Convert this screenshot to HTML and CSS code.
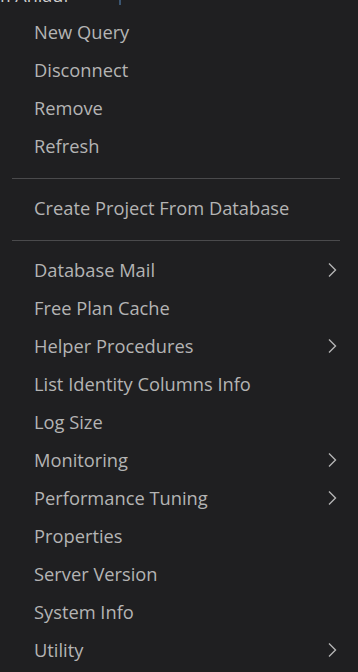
FILE: index.html
```html
<!DOCTYPE html>
<html>
<head>
<meta charset="utf-8">
<link rel="stylesheet" href="styles.css">
</head>
<body>
<div class="menu">
  <div class="peek"><span class="peek-text">m Anlauf</span><span class="peek-dot"></span></div>
  <div class="item">New Query</div>
  <div class="item">Disconnect</div>
  <div class="item">Remove</div>
  <div class="item">Refresh</div>
  <div class="sep"></div>
  <div class="item">Create Project From Database</div>
  <div class="sep"></div>
  <div class="item">Database Mail<svg class="chev" viewBox="0 0 12 16"><path d="M3 1.5 L9.5 8 L3 14.5"/></svg></div>
  <div class="item">Free Plan Cache</div>
  <div class="item">Helper Procedures<svg class="chev" viewBox="0 0 12 16"><path d="M3 1.5 L9.5 8 L3 14.5"/></svg></div>
  <div class="item">List Identity Columns Info</div>
  <div class="item">Log Size</div>
  <div class="item">Monitoring<svg class="chev" viewBox="0 0 12 16"><path d="M3 1.5 L9.5 8 L3 14.5"/></svg></div>
  <div class="item">Performance Tuning<svg class="chev" viewBox="0 0 12 16"><path d="M3 1.5 L9.5 8 L3 14.5"/></svg></div>
  <div class="item">Properties</div>
  <div class="item">Server Version</div>
  <div class="item">System Info</div>
  <div class="item">Utility<svg class="chev" viewBox="0 0 12 16"><path d="M3 1.5 L9.5 8 L3 14.5"/></svg></div>
</div>
</body>
</html>
```
FILE: styles.css
```css
html, body {
  margin: 0;
  padding: 0;
  background: #1f1f21;
}
.menu {
  width: 358px;
  height: 672px;
  overflow: hidden;
  background: #1f1f21;
  font-family: "Open Sans", "Noto Sans", sans-serif;
  font-size: 18.3px;
  color: #b4b4b4;
  display: flex;
  flex-direction: column;
}
.peek {
  height: 13px;
  position: relative;
  overflow: hidden;
  flex-shrink: 0;
}
.peek-text {
  position: absolute;
  left: -6px;
  top: -16px;
  color: #d0d0d0;
  font-size: 18px;
  line-height: 22px;
}
.peek-dot {
  position: absolute;
  left: 119px;
  top: 0;
  width: 2px;
  height: 5px;
  background: #3b5570;
}
.item {
  height: 38px;
  line-height: 38px;
  padding-left: 34px;
  padding-right: 20px;
  display: flex;
  align-items: center;
  justify-content: space-between;
  flex-shrink: 0;
  white-space: nowrap;
}
.sep {
  height: 24px;
  flex-shrink: 0;
  display: flex;
  align-items: center;
  padding: 0 18px 0 12px;
}
.sep::before {
  content: "";
  flex: 1;
  height: 1px;
  background: #4a4a4c;
  margin-top: 2px;
}
.chev {
  width: 12px;
  height: 16px;
  fill: none;
  stroke: #b4b4b4;
  stroke-width: 1.4;
}
```
